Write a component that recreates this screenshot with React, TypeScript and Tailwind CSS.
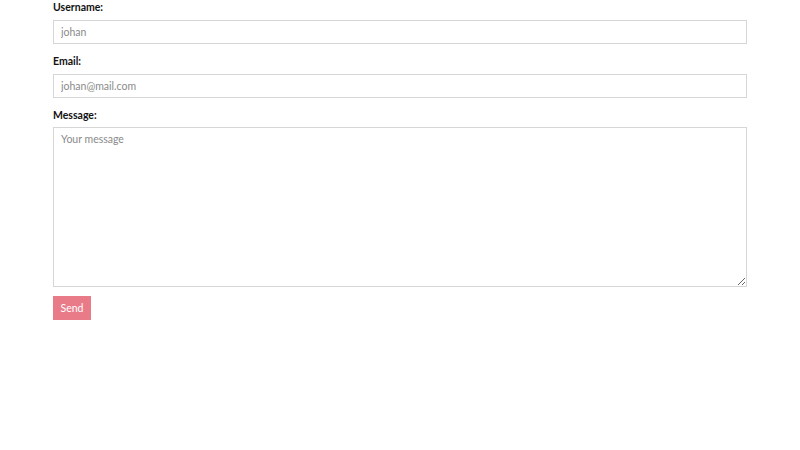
import React from "react";

export default function App() {
  return (
    <div
      className="w-[800px] h-[450px] bg-white"
      style={{ fontFamily: 'Lato, "Noto Sans", sans-serif' }}
    >
      <form className="ml-[53px] w-[694px] flex flex-col" onSubmit={(e) => e.preventDefault()}>
        <div className="mb-[10px] flex flex-col">
          <label className="h-[14px] leading-[14px] mb-[6px] text-[10.5px] font-bold text-[#111]">Username:</label>
          <input
            className="h-6 border border-[#d6d6d6] px-[7px] text-[10.5px] text-[#333] placeholder:text-[#8a8a8a] outline-none"
            placeholder="johan"
          />
        </div>
        <div className="mb-[10px] flex flex-col">
          <label className="h-[14px] leading-[14px] mb-[6px] text-[10.5px] font-bold text-[#111]">Email:</label>
          <input
            className="h-6 border border-[#d6d6d6] px-[7px] text-[10.5px] text-[#333] placeholder:text-[#8a8a8a] outline-none"
            placeholder="johan@mail.com"
          />
        </div>
        <div className="mb-[9px] flex flex-col">
          <label className="h-[14px] leading-[14px] mb-[5px] text-[10.5px] font-bold text-[#111]">Message:</label>
          <textarea
            className="h-[160px] border border-[#d6d6d6] px-[7px] py-[4px] text-[10.5px] text-[#333] placeholder:text-[#8a8a8a] outline-none"
            placeholder="Your message"
          />
        </div>
        <div className="flex">
          <button
            type="submit"
            className="h-6 w-[38px] bg-[#e97b89] text-white text-[10.5px] leading-6"
          >
            Send
          </button>
        </div>
      </form>
    </div>
  );
}
